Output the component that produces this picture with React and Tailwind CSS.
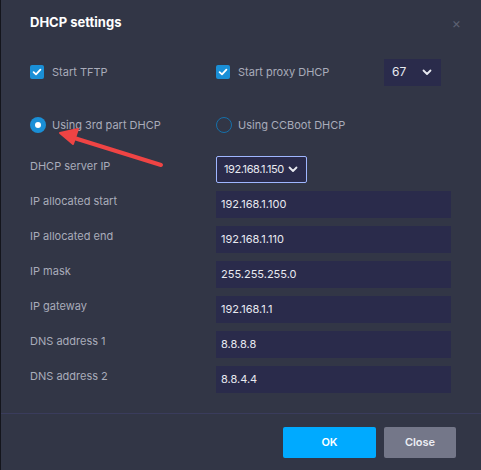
import React, { useState } from 'react';

const Check = ({ checked }) => (
  <span className="flex h-[14px] w-[14px] items-center justify-center rounded-[2px] bg-[#1a8fd6]">
    {checked && (
      <svg width="10" height="10" viewBox="0 0 10 10">
        <path d="M1.6 5.2 L4 7.4 L8.4 2.6" fill="none" stroke="#fff" strokeWidth="1.8" strokeLinecap="round" strokeLinejoin="round" />
      </svg>
    )}
  </span>
);

const Radio = ({ on }) =>
  on ? (
    <span className="flex h-[16px] w-[16px] items-center justify-center rounded-full bg-[#1a8fd6]">
      <span className="h-[6px] w-[6px] rounded-full bg-white" />
    </span>
  ) : (
    <span className="h-[16px] w-[16px] rounded-full border-[1.5px] border-[#1670aa]" />
  );

const Chevron = () => (
  <svg width="10" height="7" viewBox="0 0 10 7">
    <path d="M1.5 1.5 L5 5 L8.5 1.5" fill="none" stroke="#e8e9f0" strokeWidth="1.8" strokeLinecap="round" strokeLinejoin="round" />
  </svg>
);

const rows = [
  ['IP allocated start', '192.168.1.100'],
  ['IP allocated end', '192.168.1.110'],
  ['IP mask', '255.255.255.0'],
  ['IP gateway', '192.168.1.1'],
  ['DNS address 1', '8.8.8.8'],
  ['DNS address 2', '8.8.4.4'],
];

export default function App() {
  const [tftp] = useState(true);
  const [proxy] = useState(true);

  return (
    <div
      className="relative h-[470px] w-[481px] border-l border-[#14151c] bg-[#323646] text-[11px] text-[#a9acba]"
      style={{ fontFamily: 'Inter, "Noto Sans", sans-serif' }}
    >
      <div className="flex h-[44px] items-center justify-between pl-[29px] pr-[20px] pt-[2px]">
        <h1 className="text-[13px] font-bold text-white">DHCP settings</h1>
        <span className="text-[14px] leading-none text-[#5d6172]">×</span>
      </div>

      <div className="flex h-[56px] items-center pl-[29px]">
        <label className="flex w-[186px] items-center gap-[8px]">
          <Check checked={tftp} />
          <span>Start TFTP</span>
        </label>
        <label className="flex w-[168px] items-center gap-[8px]">
          <Check checked={proxy} />
          <span>Start proxy DHCP</span>
        </label>
        <div className="flex h-[27px] w-[57px] items-center justify-between bg-[#2a2b4b] pl-[8px] pr-[9px] text-[12px] text-[#e8e9f0]">
          <span>67</span>
          <Chevron />
        </div>
      </div>

      <div className="flex h-[50px] items-center pl-[29px]">
        <label className="flex w-[186px] items-center gap-[6px]">
          <Radio on />
          <span>Using 3rd part DHCP</span>
        </label>
        <label className="flex items-center gap-[6px]">
          <Radio />
          <span>Using CCBoot DHCP</span>
        </label>
      </div>

      <div className="flex flex-col gap-[8px] pl-[29px] pt-[6px]">
        <div className="flex items-start">
          <span className="w-[186px] pt-[2px]">DHCP server IP</span>
          <div className="flex h-[27px] w-[91px] items-center justify-between rounded-[2px] border border-[#9fb6ff] bg-[#2a2b4b] pl-[7px] pr-[8px] text-[11px] tracking-[-0.4px] text-[#e8e9f0]">
            <span>192.168.1.150</span>
            <Chevron />
          </div>
        </div>
        {rows.map(([label, value]) => (
          <div key={label} className="flex items-start">
            <span className="w-[186px] pt-[2px]">{label}</span>
            <div className="flex h-[27px] w-[235px] items-center bg-[#2a2b4b] pl-[5px] text-[11px] text-[#e8e9f0]">
              {value}
            </div>
          </div>
        ))}
      </div>

      <div className="mt-[20px] border-t border-[#3a3c5c]" />

      <div className="flex justify-end gap-[8px] pr-[25px] pt-[13px]">
        <button className="h-[31px] w-[93px] rounded-[2px] bg-[#00aaff] text-[11px] font-semibold text-white">OK</button>
        <button className="h-[31px] w-[72px] rounded-[2px] bg-[#747789] text-[11px] font-semibold text-[#eceef4]">Close</button>
      </div>

      <svg className="pointer-events-none absolute left-0 top-0" width="481" height="470">
        <line x1="160" y1="165" x2="70" y2="137" stroke="#ef4444" strokeWidth="4" strokeLinecap="round" />
        <path d="M59 133 L77 129 L72 144 Z" fill="#ef4444" stroke="#ef4444" strokeWidth="2" strokeLinejoin="round" />
      </svg>
    </div>
  );
}
